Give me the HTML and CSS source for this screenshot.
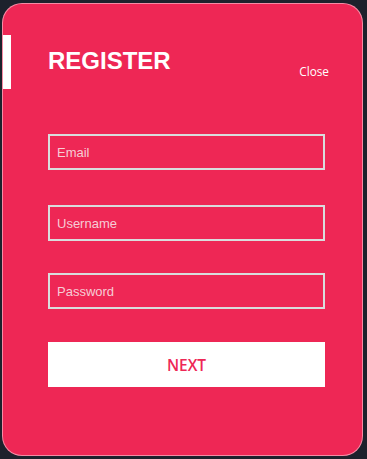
FILE: index.html
```html
<!DOCTYPE html>
<html lang="en">
<head>
<meta charset="utf-8">
<title>Register</title>
<link rel="stylesheet" href="styles.css">
</head>
<body>
<div class="card">
  <span class="marker"></span>
  <div class="header">
    <h1 class="title">REGISTER</h1>
    <a class="close" href="#">Close</a>
  </div>
  <form class="form">
    <input class="field field-email" type="email" placeholder="Email">
    <input class="field field-user" type="text" placeholder="Username">
    <input class="field field-pass" type="password" placeholder="Password">
    <button class="next" type="button">NEXT</button>
  </form>
</div>
</body>
</html>
```
FILE: styles.css
```css
* { box-sizing: border-box; }
html, body { margin: 0; padding: 0; }
body {
  width: 367px;
  height: 459px;
  background: #1d212c;
  overflow: hidden;
  padding: 3px 4px 3px 2px;
}
.card {
  position: relative;
  width: 361px;
  height: 453px;
  background: #ee2755;
  border: 1px solid rgba(255, 220, 230, 0.55);
  border-radius: 20px;
  padding: 43px 33px 0 45px;
}
.marker {
  position: absolute;
  left: 0;
  top: 31px;
  width: 8px;
  height: 54px;
  background: #ffffff;
}
.header {
  display: flex;
  justify-content: space-between;
  align-items: flex-start;
}
.title {
  margin: 0;
  font-family: "Liberation Sans", Arial, sans-serif;
  font-weight: 700;
  font-size: 24px;
  line-height: 28px;
  color: #ffffff;
}
.close {
  margin-top: 16px;
  font-family: "Open Sans", sans-serif;
  font-size: 11.8px;
  line-height: 16px;
  color: #ffffff;
  text-decoration: none;
}
.form {
  display: flex;
  flex-direction: column;
  width: 277px;
  margin-top: 55px;
}
.field {
  width: 277px;
  height: 36px;
  margin: 0;
  padding: 0 7px;
  border: 2px solid #d9dcdc;
  border-radius: 0;
  background: transparent;
  font-family: "Liberation Sans", Arial, sans-serif;
  font-size: 13px;
  color: #ffffff;
  outline: none;
}
.field::placeholder { color: #f6cdd6; opacity: 1; }
.field-user { margin-top: 35px; }
.field-pass { margin-top: 32px; }
.next {
  margin-top: 33px;
  width: 277px;
  height: 45px;
  border: 0;
  border-radius: 0;
  background: #ffffff;
  color: #ee2755;
  font-family: "Open Sans", sans-serif;
  font-weight: 600;
  font-size: 15.5px;
  padding: 0;
  cursor: pointer;
}
```
